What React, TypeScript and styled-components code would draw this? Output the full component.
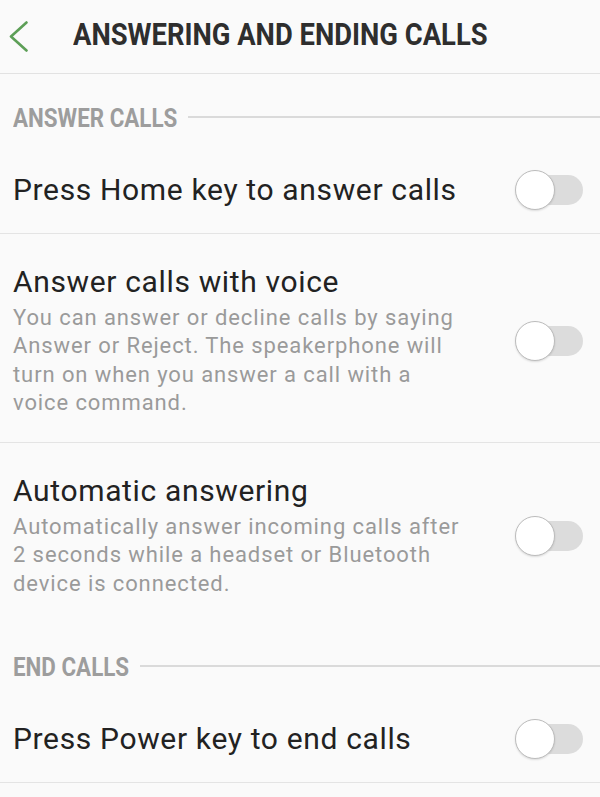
import React from "react";
import styled, { createGlobalStyle } from "styled-components";

const Global = createGlobalStyle`
  html, body { margin: 0; padding: 0; background: #fafafa; }
  body { font-family: Roboto, "Noto Sans", sans-serif; -webkit-font-smoothing: antialiased; }
`;

const Screen = styled.div`
  width: 600px;
  min-height: 797px;
  background: #fafafa;
  overflow: hidden;
`;

const Header = styled.header`
  display: flex;
  align-items: center;
  height: 74px;
  box-sizing: border-box;
  border-bottom: 1px solid #e2e2e2;
`;

const BackButton = styled.button`
  width: 73px;
  height: 72px;
  padding: 0 0 0 9px;
  border: 0;
  background: none;
  display: flex;
  align-items: center;
  cursor: pointer;
`;

const Title = styled.h1`
  margin: -3px 0 0;
  font-family: Roboto, sans-serif;
  font-weight: 700;
  font-size: 31px;
  line-height: 36px;
  color: #2e2e2e;
  white-space: nowrap;
  transform: scaleX(0.883);
  transform-origin: left center;
`;

const SectionHeader = styled.div`
  display: flex;
  align-items: flex-start;
  gap: 11px;
  padding: 30px 0 8px 13px;
`;

const SectionLabel = styled.span<{ $w: number }>`
  display: block;
  width: ${(p) => p.$w}px;
  font-weight: 700;
  font-size: 25px;
  line-height: 30px;
  height: 30px;
  color: #9d9d9d;
  white-space: nowrap;
  & > span {
    display: inline-block;
    transform: scaleX(0.895);
    transform-origin: left center;
  }
`;

const SectionRule = styled.div`
  flex: 1;
  height: 2px;
  margin-top: 12px;
  background: #dadada;
`;

const Row = styled.div<{ $divider: boolean }>`
  display: flex;
  align-items: center;
  padding: 30px 17px 25px 13px;
  border-bottom: ${(p) => (p.$divider ? "1px solid #e4e4e4" : "none")};
`;

const RowText = styled.div`
  flex: 1;
  min-width: 0;
  max-width: 452px;
  margin-right: auto;
`;

const RowTitle = styled.div`
  font-size: 30px;
  line-height: 36px;
  letter-spacing: 0.65px;
  color: #222;
  white-space: nowrap;
`;

const RowDesc = styled.div`
  margin-top: 4px;
  font-size: 22px;
  line-height: 28.3px;
  letter-spacing: 0.9px;
  color: #9a9a9a;
`;

const Switch = styled.div`
  position: relative;
  width: 68px;
  height: 36px;
  flex: none;
`;

const Track = styled.div`
  position: absolute;
  right: 0;
  top: 3px;
  width: 62px;
  height: 30px;
  border-radius: 15px;
  background: #dcdcdc;
`;

const Knob = styled.div`
  position: absolute;
  left: 0;
  top: -2px;
  width: 40px;
  height: 40px;
  box-sizing: border-box;
  border-radius: 50%;
  background: #fff;
  border: 1.5px solid #bcbcbc;
  box-shadow: 0 1px 2px rgba(0, 0, 0, 0.12);
`;

type Setting = { title: string; desc?: string; divider: boolean };

const Toggle = () => (
  <Switch role="switch" aria-checked={false}>
    <Track />
    <Knob />
  </Switch>
);

const SettingRow = ({ title, desc, divider }: Setting) => (
  <Row $divider={divider}>
    <RowText>
      <RowTitle>{title}</RowTitle>
      {desc && <RowDesc>{desc}</RowDesc>}
    </RowText>
    <Toggle />
  </Row>
);

const Section = ({ label, width }: { label: string; width: number }) => (
  <SectionHeader>
    <SectionLabel $w={width}>
      <span>{label}</span>
    </SectionLabel>
    <SectionRule />
  </SectionHeader>
);

export default function App() {
  return (
    <Screen>
      <Global />
      <Header>
        <BackButton aria-label="Back">
          <svg width="20" height="32" viewBox="0 0 20 32">
            <polyline
              points="17.5,1.5 2,15.5 17.5,29.5"
              fill="none"
              stroke="#5d9f57"
              strokeWidth="2.6"
              strokeLinecap="round"
              strokeLinejoin="round"
            />
          </svg>
        </BackButton>
        <Title>ANSWERING AND ENDING CALLS</Title>
      </Header>

      <Section label="ANSWER CALLS" width={164} />
      <SettingRow title="Press Home key to answer calls" divider />
      <SettingRow
        title="Answer calls with voice"
        desc="You can answer or decline calls by saying Answer or Reject. The speakerphone will turn on when you answer a call with a voice command."
        divider
      />
      <SettingRow
        title="Automatic answering"
        desc="Automatically answer incoming calls after 2 seconds while a headset or Bluetooth device is connected."
        divider={false}
      />

      <Section label="END CALLS" width={116} />
      <SettingRow title="Press Power key to end calls" divider />
    </Screen>
  );
}
